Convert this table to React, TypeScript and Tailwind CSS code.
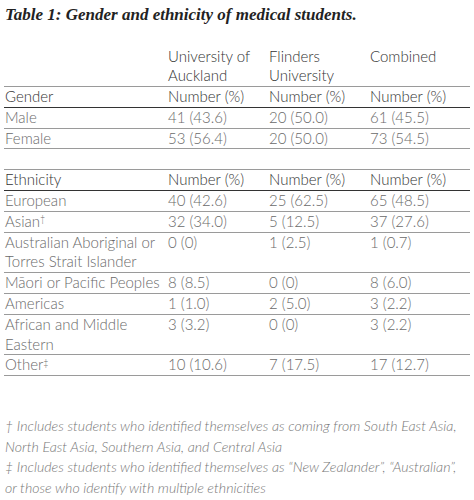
const rows1 = [
  ["Male", "41 (43.6)", "20 (50.0)", "61 (45.5)"],
  ["Female", "53 (56.4)", "20 (50.0)", "73 (54.5)"],
];

const rows2: [React.ReactNode, string, string, string][] = [
  ["European", "40 (42.6)", "25 (62.5)", "65 (48.5)"],
  [<>Asian<sup className="text-[9px]">†</sup></>, "32 (34.0)", "5 (12.5)", "37 (27.6)"],
  [<>Australian Aboriginal or<br />Torres Strait Islander</>, "0 (0)", "1 (2.5)", "1 (0.7)"],
  ["Māori or Pacific Peoples", "8 (8.5)", "0 (0)", "8 (6.0)"],
  ["Americas", "1 (1.0)", "2 (5.0)", "3 (2.2)"],
  [<>African and Middle<br />Eastern</>, "3 (3.2)", "0 (0)", "3 (2.2)"],
  [<>Other<sup className="text-[9px]">‡</sup></>, "10 (10.6)", "7 (17.5)", "17 (12.7)"],
];

const grid = "grid grid-cols-[163px_101px_101px_1fr]";

function Row({ cells, dark }: { cells: React.ReactNode[]; dark?: boolean }) {
  return (
    <div className={`${grid} border-b ${dark ? "border-[#333] text-[#333]" : "border-[#9a9a9a] text-[#6a6a6a]"}`}>
      {cells.map((c, i) => (
        <div key={i} className="pl-[1px] whitespace-nowrap">
          {c}
        </div>
      ))}
    </div>
  );
}

export default function App() {
  return (
    <div className="w-[474px] h-[500px] bg-white overflow-hidden px-[4px]">
      <div className="pt-[5px] pl-[1px] text-[17px] leading-[20px] font-bold italic text-[#222] font-['Liberation_Serif',serif]">
        Table 1: Gender and ethnicity of medical students.
      </div>
      <div className="mt-[21.5px] w-[466px] text-[15px] leading-[19.8px] font-['Lato',sans-serif] font-light">
        <div className={`${grid} border-b border-[#9a9a9a] text-[#333]`}>
          <div />
          <div className="pl-[1px]">University of<br />Auckland</div>
          <div className="pl-[1px]">Flinders<br />University</div>
          <div className="pl-[1px]">Combined</div>
        </div>
        <Row dark cells={["Gender", "Number (%)", "Number (%)", "Number (%)"]} />
        {rows1.map((r, i) => (
          <Row key={i} cells={r} />
        ))}
        <div className="h-[20.8px] border-b border-[#9a9a9a]" />
        <Row dark cells={["Ethnicity", "Number (%)", "Number (%)", "Number (%)"]} />
        {rows2.map((r, i) => (
          <Row key={i} cells={r} />
        ))}
      </div>
      <div className="mt-[40px] pl-[1px] text-[14.2px] leading-[20.6px] italic font-light text-[#777] font-['Lato',sans-serif]">
        <div>† Includes students who identified themselves as coming from South East Asia,</div>
        <div>North East Asia, Southern Asia, and Central Asia</div>
        <div>‡ Includes students who identified themselves as “New Zealander”, “Australian”,</div>
        <div>or those who identify with multiple ethnicities</div>
      </div>
    </div>
  );
}
